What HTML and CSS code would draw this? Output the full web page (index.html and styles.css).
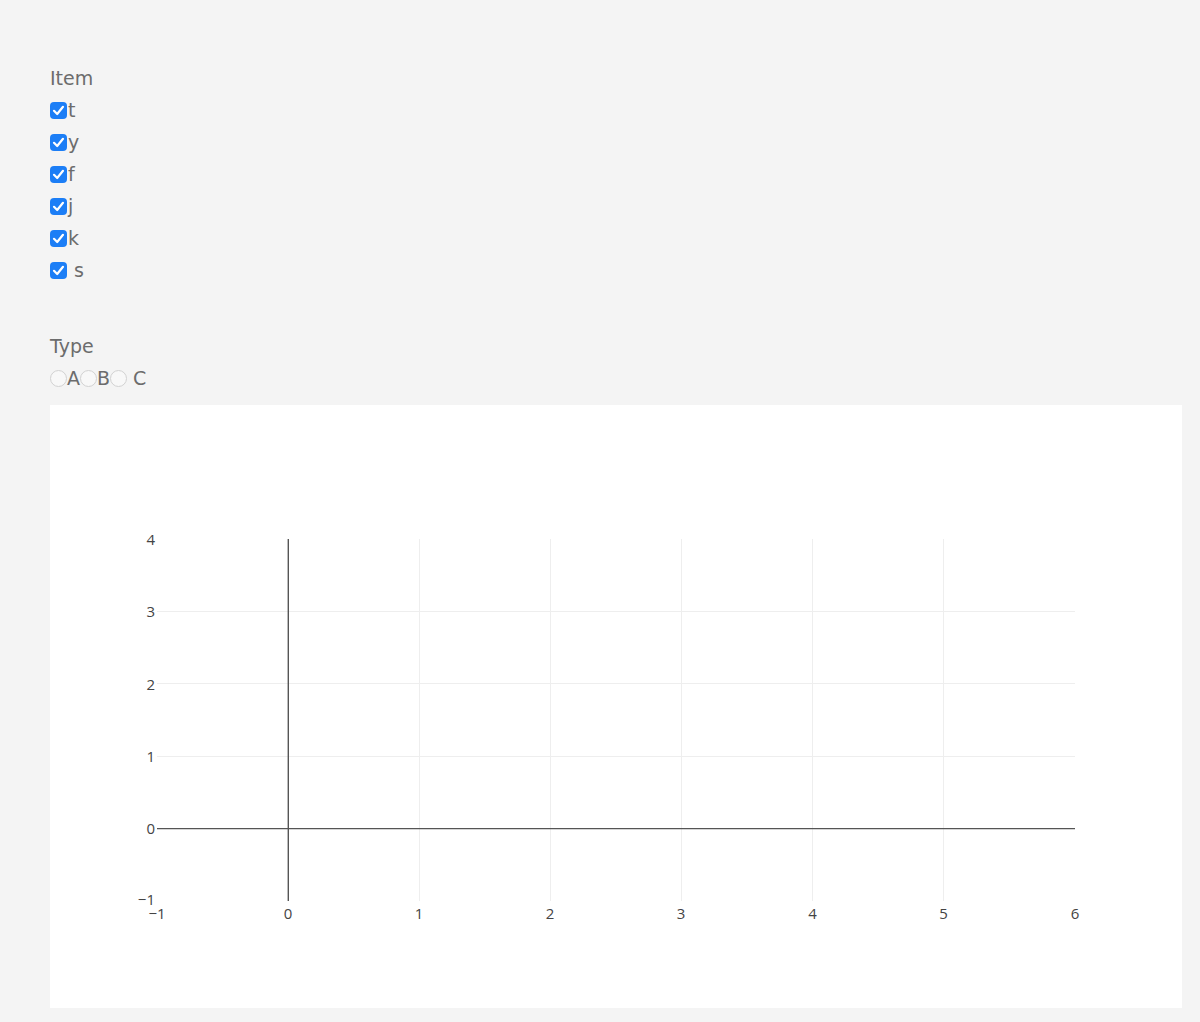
FILE: index.html
```html
<!DOCTYPE html>
<html>
<head>
<meta charset="utf-8">
<link rel="stylesheet" href="styles.css">
</head>
<body>
<div class="page">
  <div class="group items">
    <div class="title">Item</div>
    <label class="row"><span class="box"><svg viewBox="0 0 17 17" width="17" height="17"><path d="M4 8.8 L7.2 12 L13 4.8" fill="none" stroke="#fff" stroke-width="2.2" stroke-linecap="round" stroke-linejoin="round"/></svg></span>t</label>
    <label class="row"><span class="box"><svg viewBox="0 0 17 17" width="17" height="17"><path d="M4 8.8 L7.2 12 L13 4.8" fill="none" stroke="#fff" stroke-width="2.2" stroke-linecap="round" stroke-linejoin="round"/></svg></span>y</label>
    <label class="row"><span class="box"><svg viewBox="0 0 17 17" width="17" height="17"><path d="M4 8.8 L7.2 12 L13 4.8" fill="none" stroke="#fff" stroke-width="2.2" stroke-linecap="round" stroke-linejoin="round"/></svg></span>f</label>
    <label class="row"><span class="box"><svg viewBox="0 0 17 17" width="17" height="17"><path d="M4 8.8 L7.2 12 L13 4.8" fill="none" stroke="#fff" stroke-width="2.2" stroke-linecap="round" stroke-linejoin="round"/></svg></span>j</label>
    <label class="row"><span class="box"><svg viewBox="0 0 17 17" width="17" height="17"><path d="M4 8.8 L7.2 12 L13 4.8" fill="none" stroke="#fff" stroke-width="2.2" stroke-linecap="round" stroke-linejoin="round"/></svg></span>k</label>
    <label class="row"><span class="box"><svg viewBox="0 0 17 17" width="17" height="17"><path d="M4 8.8 L7.2 12 L13 4.8" fill="none" stroke="#fff" stroke-width="2.2" stroke-linecap="round" stroke-linejoin="round"/></svg></span>&nbsp;s</label>
  </div>
  <div class="group types">
    <div class="title">Type</div>
    <div class="row"><span class="radio"></span>A<span class="radio"></span>B<span class="radio"></span>&nbsp;C</div>
  </div>
  <div class="plot">
    <svg width="1132" height="603" viewBox="0 0 1132 603">
      <g stroke="#eeeeee" stroke-width="1">
        <line x1="369.5" y1="134" x2="369.5" y2="496"/>
        <line x1="500.5" y1="134" x2="500.5" y2="496"/>
        <line x1="631.5" y1="134" x2="631.5" y2="496"/>
        <line x1="762.5" y1="134" x2="762.5" y2="496"/>
        <line x1="893.5" y1="134" x2="893.5" y2="496"/>
        <line x1="107" y1="206.5" x2="1025" y2="206.5"/>
        <line x1="107" y1="278.5" x2="1025" y2="278.5"/>
        <line x1="107" y1="351.5" x2="1025" y2="351.5"/>
      </g>
      <g stroke="#555555" stroke-width="1.4">
        <line x1="238.3" y1="134" x2="238.3" y2="496"/>
        <line x1="107" y1="423.6" x2="1025" y2="423.6"/>
      </g>
      <g class="tick" text-anchor="end">
        <text x="105" y="139.5">4</text>
        <text x="105" y="212">3</text>
        <text x="105" y="284.5">2</text>
        <text x="105" y="356.5">1</text>
        <text x="105" y="429">0</text>
        <text x="105" y="500">−1</text>
      </g>
      <g class="tick" text-anchor="middle">
        <text x="107" y="514">−1</text>
        <text x="238" y="514">0</text>
        <text x="369" y="514">1</text>
        <text x="500" y="514">2</text>
        <text x="631" y="514">3</text>
        <text x="762.5" y="514">4</text>
        <text x="893.5" y="514">5</text>
        <text x="1025" y="514">6</text>
      </g>
    </svg>
  </div>
</div>
</body>
</html>
```

FILE: styles.css
```css
html, body {
  margin: 0;
  padding: 0;
  background: #f4f4f4;
}
.page {
  padding: 62px 18px 14px 50px;
  font-family: "DejaVu Sans", Verdana, sans-serif;
  font-size: 19px;
  color: #6c6c6c;
}
.group {
  display: flex;
  flex-direction: column;
}
.title {
  height: 32px;
  line-height: 32px;
}
.row {
  height: 32px;
  line-height: 32px;
  display: flex;
  align-items: center;
}
.types {
  margin-top: 44px;
}
.box {
  width: 17px;
  height: 17px;
  border-radius: 4px;
  background: #1c7ef6;
  display: inline-flex;
  margin-right: 1px;
}
.box svg {
  display: block;
}
.radio {
  width: 17px;
  height: 17px;
  border-radius: 50%;
  border: 1px solid #d2d2d2;
  background: #f8f8f8;
  display: inline-block;
  box-sizing: border-box;
}
.plot {
  margin-top: 11px;
  width: 1132px;
  height: 603px;
  background: #ffffff;
}
.plot svg {
  display: block;
}
.tick {
  font-family: "Open Sans", sans-serif;
  font-size: 15px;
  fill: #444444;
}
```
